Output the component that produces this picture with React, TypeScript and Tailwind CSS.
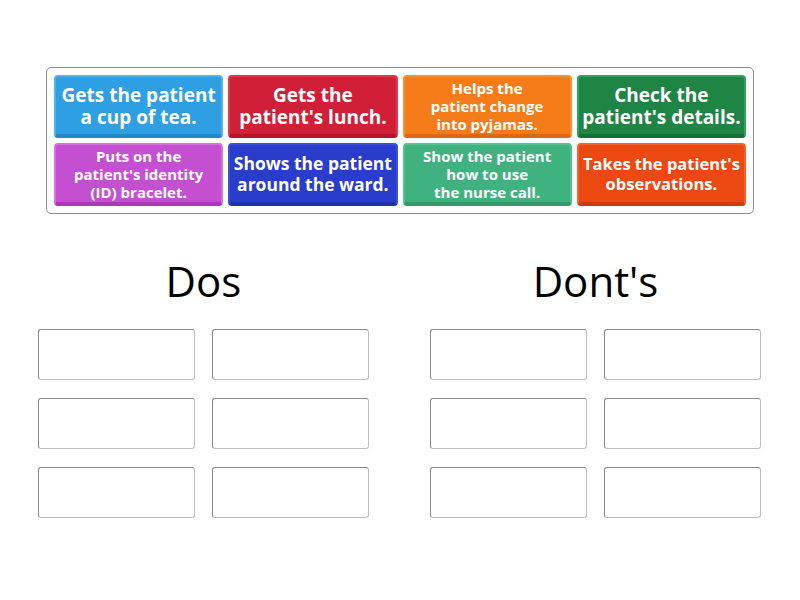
import React from "react";

type Tile = { lines: string[]; cls: string; text: string };

const tiles: Tile[] = [
  { lines: ["Gets the patient", "a cup of tea."], cls: "bg-[#2e9fe3] border-[#4fb3ee] border-b-[#2188c9]", text: "text-[19px] leading-[22px]" },
  { lines: ["Gets the", "patient's lunch."], cls: "bg-[#d21f38] border-[#e0394f] border-b-[#b5142b]", text: "text-[19px] leading-[22px]" },
  { lines: ["Helps the", "patient change", "into pyjamas."], cls: "bg-[#f67c1a] border-[#fb8f33] border-b-[#dc6810]", text: "text-[15px] leading-[18px]" },
  { lines: ["Check the", "patient's details."], cls: "bg-[#1f8545] border-[#2ea55c] border-b-[#176c37]", text: "text-[19px] leading-[22px]" },
  { lines: ["Puts on the", "patient's identity", "(ID) bracelet."], cls: "bg-[#c54fd1] border-[#d672e0] border-b-[#ad36bb]", text: "text-[15px] leading-[18px]" },
  { lines: ["Shows the patient", "around the ward."], cls: "bg-[#2a3ccc] border-[#3a51dc] border-b-[#2030b0]", text: "text-[17.5px] leading-[21px]" },
  { lines: ["Show the patient", "how to use", "the nurse call."], cls: "bg-[#3fb27f] border-[#54c391] border-b-[#349a6c]", text: "text-[15px] leading-[18px]" },
  { lines: ["Takes the patient's", "observations."], cls: "bg-[#ec4812] border-[#f5632c] border-b-[#cf3a0c]", text: "text-[16.5px] leading-[20px]" },
];

function Box() {
  return <div className="h-[51px] rounded-[3px] border border-[#8a8a8a] border-r-[#bdbdbd] border-b-[#bdbdbd] bg-white" />;
}

function Group({ title }: { title: string }) {
  return (
    <div className="flex w-[331px] flex-col">
      <div className="text-center text-[42px] leading-[50px] text-black" style={{ fontFamily: '"Open Sans", sans-serif' }}>
        {title}
      </div>
      <div className="mt-[23px] grid grid-cols-2 gap-x-[17px] gap-y-[18px]">
        {Array.from({ length: 6 }).map((_, i) => (
          <Box key={i} />
        ))}
      </div>
    </div>
  );
}

export default function App() {
  return (
    <div className="h-[600px] w-[800px] bg-white pt-[67px]" style={{ fontFamily: '"Open Sans", sans-serif' }}>
      <div className="mx-[46px] rounded-[5px] border border-[#8c8c8c] p-[7px]">
        <div className="grid grid-cols-4 gap-x-[5px] gap-y-[5px]">
          {tiles.map((t, i) => (
            <div
              key={i}
              className={`flex h-[63px] flex-col items-center justify-center rounded-[4px] border-2 border-b-4 ${t.cls}`}
            >
              <div className={`text-center font-bold text-white ${t.text}`}>
                {t.lines.map((l, j) => (
                  <div key={j} className="whitespace-nowrap">{l}</div>
                ))}
              </div>
            </div>
          ))}
        </div>
      </div>
      <div className="mt-[42px] flex justify-between pl-[38px] pr-[39px]">
        <Group title="Dos" />
        <Group title="Dont's" />
      </div>
    </div>
  );
}
